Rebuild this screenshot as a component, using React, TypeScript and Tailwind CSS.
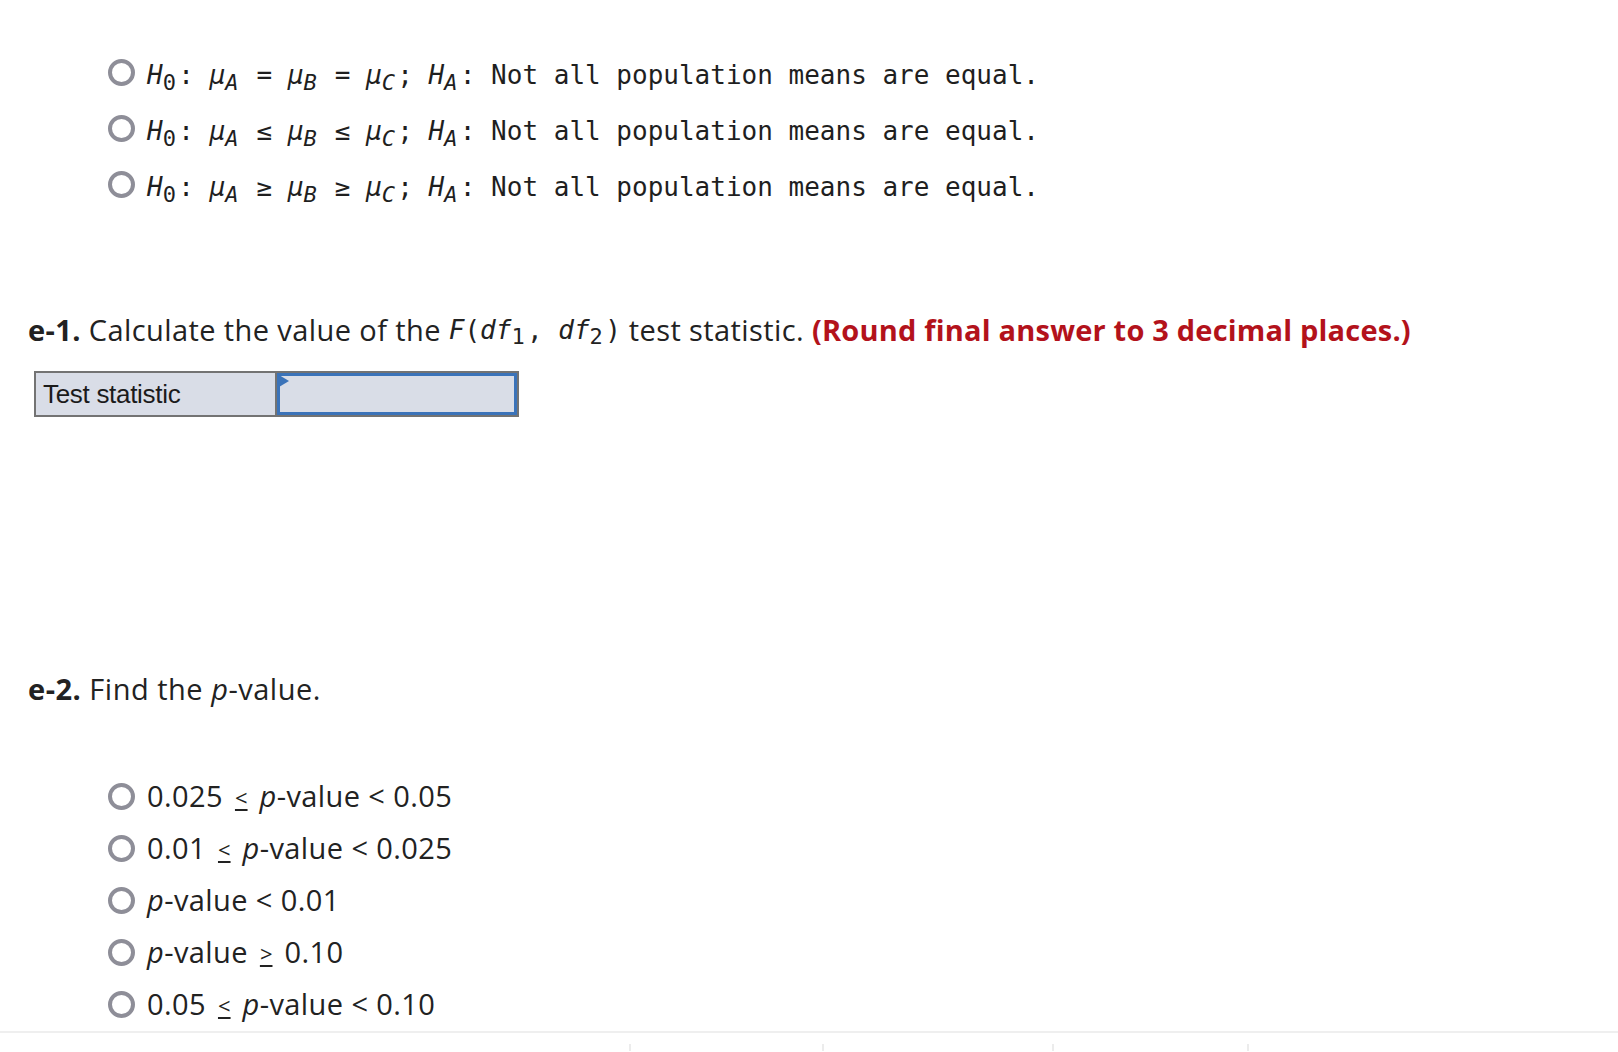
const mono = "font-['DejaVu_Sans_Mono',monospace]";
const sans = "font-['Open_Sans','Liberation_Sans',sans-serif]";

function Radio() {
  return <span className="w-[27px] h-[27px] rounded-full border-[4px] border-[#8e8e98] bg-white shrink-0" />;
}

function Sub({ children, it }: { children: React.ReactNode; it?: boolean }) {
  return (
    <sub className={`inline-block w-[15.6px] text-[22px] ${it ? 'italic' : 'not-italic'}`}>{children}</sub>
  );
}

function Hypothesis({ op }: { op: string }) {
  return (
    <div className="h-[56px] flex items-center gap-[12px]">
      <Radio />
      <span className={`${mono} mt-[6px] text-[26px] text-[#1f1f1f] whitespace-pre leading-none`}>
        <i>H</i><Sub>0</Sub>{': '}
        <i>μ</i><Sub it>A</Sub>{` ${op} `}
        <i>μ</i><Sub it>B</Sub>{` ${op} `}
        <i>μ</i><Sub it>C</Sub>{'; '}
        <i>H</i><Sub it>A</Sub>{': Not all population means are equal.'}
      </span>
    </div>
  );
}

function Le({ ge }: { ge?: boolean }) {
  return (
    <span className="inline-block mx-[12px] text-[22px] underline underline-offset-[3px] decoration-[1.5px] align-[1px] tracking-normal">
      {ge ? '>' : '<'}
    </span>
  );
}

function PRow({ children }: { children: React.ReactNode }) {
  return (
    <div className="h-[52px] flex items-center gap-[12px]">
      <Radio />
      <span className="text-[29px] text-[#222] tracking-[0.4px] whitespace-pre">{children}</span>
    </div>
  );
}

const P = () => <><i>p</i>-value</>;

export default function App() {
  return (
    <div className={`w-[1618px] h-[1052px] bg-white overflow-hidden flex flex-col ${sans} text-[#222]`}>
      <div className="pl-[108px] pt-[44px] flex flex-col">
        <Hypothesis op="=" />
        <Hypothesis op="≤" />
        <Hypothesis op="≥" />
      </div>

      <p className="mt-[98px] pl-[28px] h-[40px] flex items-center text-[29px] tracking-[0.4px] whitespace-pre">
        <b>e-1.</b>{' Calculate the value of the '}
        <span className={`${mono} text-[26px] tracking-normal`}>
          <i>F</i>(<i>df</i><Sub>1</Sub>, <i>df</i><Sub>2</Sub>)
        </span>
        {' test statistic. '}
        <b className="text-[#b3121b] tracking-[0.2px]">(Round final answer to 3 decimal places.)</b>
      </p>

      <div className="mt-[21px] ml-[34px] w-[485px] h-[46px] flex border-2 border-[#737373] bg-[#d9dde7]">
        <div className="w-[241px] border-r-2 border-[#737373] flex items-center pl-[7px] font-['Liberation_Sans',sans-serif] text-[26px] tracking-[-0.3px] text-[#1b1b1b]">
          Test statistic
        </div>
        <div className="flex-1 relative border-[3px] border-[#3b73b9]">
          <span className="absolute left-[-1px] top-[-1px] w-0 h-0 border-y-[6px] border-y-transparent border-l-[10px] border-l-[#3b73b9]" />
        </div>
      </div>

      <p className="mt-[252px] pl-[28px] h-[40px] flex items-center text-[29px] tracking-[0.5px] whitespace-pre">
        <b>e-2.</b>{' Find the '}<P />.
      </p>

      <div className="mt-[61px] pl-[108px] flex flex-col">
        <PRow>0.025<Le /><P /> &lt; 0.05</PRow>
        <PRow>0.01<Le /><P /> &lt; 0.025</PRow>
        <PRow><P /> &lt; 0.01</PRow>
        <PRow><P /><Le ge />0.10</PRow>
        <PRow>0.05<Le /><P /> &lt; 0.10</PRow>
      </div>

      <div className="mt-[1px] border-t-2 border-[#efefef] pt-[11px] flex h-[20px]">
        <div className="w-[629px]" />
        <div className="w-[2px] bg-[#ececec]" />
        <div className="w-[191px]" />
        <div className="w-[2px] bg-[#ececec]" />
        <div className="w-[228px]" />
        <div className="w-[2px] bg-[#ececec]" />
        <div className="w-[193px]" />
        <div className="w-[2px] bg-[#ececec]" />
      </div>
    </div>
  );
}
